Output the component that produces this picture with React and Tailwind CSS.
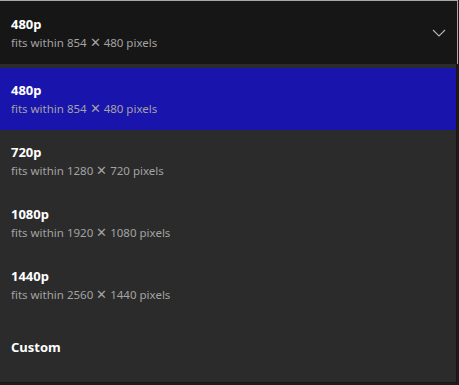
import { useState } from 'react'

const options = [
  { key: '480p', label: '480p', w: 854, h: 480 },
  { key: '720p', label: '720p', w: 1280, h: 720 },
  { key: '1080p', label: '1080p', w: 1920, h: 1080 },
  { key: '1440p', label: '1440p', w: 2560, h: 1440 },
  { key: 'custom', label: 'Custom' },
]

function Sub({ w, h }) {
  return (
    <div className="text-[11.5px] leading-[14px] text-[#a3a3a3]">
      fits within {w} <span className="text-[13px] font-light">✕</span> {h} pixels
    </div>
  )
}

export default function App() {
  const [selected, setSelected] = useState('480p')
  const current = options.find((o) => o.key === selected)

  return (
    <div
      className="h-[385px] w-[459px] overflow-hidden bg-[#1c1c1c]"
      style={{ fontFamily: '"Noto Sans", "Open Sans", sans-serif' }}
    >
      <div className="flex h-[64px] w-[458px] items-center justify-between border-t border-r border-[#a8a8a8] bg-[#161616] pl-[11px] pr-[10px]">
        <div className="flex flex-col gap-[3px]">
          <div className="text-[13px] leading-[16px] font-bold text-white">{current.label}</div>
          {current.w ? <Sub w={current.w} h={current.h} /> : null}
        </div>
        <svg width="14" height="8" viewBox="0 0 14 8" className="mr-[1px] mt-[1px]" fill="none">
          <path d="M1 1l6 6 6-6" stroke="#b5b5b5" strokeWidth="1.1" />
        </svg>
      </div>

      <div className="w-[457px] border-r border-b border-[#171717] bg-[#2b2b2b] pt-[4px]">
        {options.map((o) => (
          <button
            key={o.key}
            type="button"
            onClick={() => setSelected(o.key)}
            className={
              'flex h-[62px] w-full flex-col justify-center gap-[3px] pl-[11px] text-left ' +
              (o.key === selected ? 'bg-[#1914ab]' : 'bg-[#2b2b2b]')
            }
          >
            <div className="text-[13px] leading-[16px] font-bold text-white">{o.label}</div>
            {o.w ? <Sub w={o.w} h={o.h} /> : null}
          </button>
        ))}
        <div className="h-[4px]" />
      </div>
    </div>
  )
}
